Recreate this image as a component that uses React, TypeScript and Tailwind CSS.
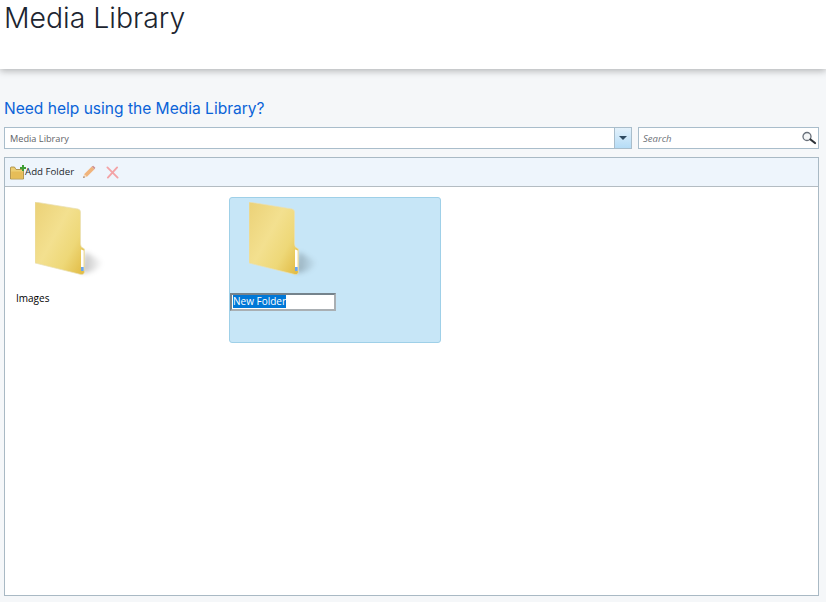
import React from "react";

function FolderIcon() {
  const id = React.useId();
  return (
    <svg width="70" height="80" viewBox="0 0 70 80" className="block">
      <defs>
        <linearGradient id={`${id}-body`} x1="0" y1="0.1" x2="1" y2="0.9">
          <stop offset="0" stopColor="#ecd37a" />
          <stop offset="0.42" stopColor="#f3e08f" />
          <stop offset="0.72" stopColor="#eed878" />
          <stop offset="1" stopColor="#e2bd48" />
        </linearGradient>
        <linearGradient id={`${id}-shadow`} x1="0" y1="0" x2="1" y2="0">
          <stop offset="0" stopColor="#000" stopOpacity="0.26" />
          <stop offset="1" stopColor="#000" stopOpacity="0" />
        </linearGradient>
        <filter id={`${id}-blur`} x="-30%" y="-30%" width="160%" height="160%">
          <feGaussianBlur stdDeviation="2.500" />
        </filter>
      </defs>
      <path d="M50 50 L68 60 Q62 71 46 71 Z" fill={`url(#${id}-shadow)`} filter={`url(#${id}-blur)`} />
      <path
        d="M0 0 L43 7 Q45.500 7.500 45.500 10 L45.500 42 Q45.500 45 48 46 L49.500 47 L49.500 69 Q49.500 73 46 72.500 L0 61 Z"
        fill={`url(#${id}-body)`}
        stroke="#eadfb4"
        strokeWidth="0.7"
      />
      <path d="M46 47.500 L48.700 48.500 L48.700 69 L46 69 Z" fill="#ffffff" />
      <rect x="46" y="65" width="2.700" height="4" fill="#6aa5ee" />
    </svg>
  );
}

function AddFolderIcon() {
  return (
    <svg width="16" height="16" viewBox="0 0 16 16" className="block">
      <path d="M0.500 3.500 L0.500 15 L13.500 15 L13.500 5.500 L6 5.500 L4.500 3 L1 3 Z" fill="#edcf74" stroke="#a5853a" strokeWidth="0.8" />
      <path d="M1.200 7.500 L12.800 7.500 L12.800 14.300 L1.200 14.300 Z" fill="#e6bd58" />
      <path d="M10 3 H12 V1 H14 V3 H16 V5 H14 V7 H12 V5 H10 Z" fill="#3f9e35" />
    </svg>
  );
}

function PencilIcon() {
  return (
    <svg width="14" height="14" viewBox="0 0 15 15" className="block">
      <path d="M1.500 13.500 L2.500 9.700 L10.500 1.700 L13.300 4.500 L5.300 12.500 Z" fill="#f0b47c" />
      <path d="M10.500 1.700 L12 0.700 L14.300 3 L13.300 4.500 Z" fill="#cf8f8f" />
      <path d="M1.500 13.500 L2.500 9.700 L5.300 12.500 Z" fill="#f7dcc0" />
      <path d="M1.200 13.800 L2 11.800 L3.200 13 Z" fill="#8a6a58" />
    </svg>
  );
}

function DeleteIcon() {
  return (
    <svg width="13" height="13" viewBox="0 0 14 14" className="block">
      <path d="M1.500 1.500 L12.500 12.500 M12 1.500 L2 12.500" stroke="#f3a3a6" strokeWidth="2" strokeLinecap="round" />
    </svg>
  );
}

function SearchIcon() {
  return (
    <svg width="16" height="14" viewBox="0 0 16 14" className="block">
      <circle cx="6" cy="5.500" r="4" fill="#f4f6f7" stroke="#68707a" strokeWidth="1.300" />
      <path d="M9.500 8.500 L14 12" stroke="#2d3338" strokeWidth="2.200" strokeLinecap="round" />
    </svg>
  );
}

export default function App() {
  return (
    <div className="min-h-[602px] h-[602px] overflow-hidden bg-[#f5f7f9] font-['Inter','Liberation_Sans',sans-serif]">
      <header className="h-[69px] bg-white pl-[4px] shadow-[0_2px_7px_rgba(0,0,0,0.28)]">
        <h1 className="text-[28.400px] leading-[35px] font-light text-[#1c2530]">Media Library</h1>
      </header>

      <div className="px-[4px] pt-[29px] pr-[7px]">
        <a className="block text-[15.550px] leading-[22px] text-[#0b63d8]">Need help using the Media Library?</a>

        <div className="mt-[7px] flex gap-[6px]">
          <div className="flex h-[22px] w-[628px] border border-[#a9bdcb] bg-white">
            <div className="flex-1 pl-[5px] text-[9.200px] leading-[21px] text-[#5f6468] font-['Open_Sans','Liberation_Sans',sans-serif]">
              Media Library
            </div>
            <div className="flex w-[17px] items-center justify-center border-l border-[#a9bdcb] bg-gradient-to-b from-[#e3f1fb] to-[#b5dcf6]">
              <div className="h-0 w-0 border-x-[4.500px] border-t-[4px] border-x-transparent border-t-[#2f4a60]" />
            </div>
          </div>
          <div className="flex h-[22px] w-[181px] items-center justify-between border border-[#a9bdcb] bg-white pl-[4px] pr-[1px]">
            <span className="mt-[2px] text-[9.500px] italic text-[#6d7278] font-['Open_Sans','Liberation_Sans',sans-serif]">Search</span>
            <SearchIcon />
          </div>
        </div>

        <div className="mt-[8px] h-[439px] border border-[#a9b9c4] bg-white font-['Open_Sans','Liberation_Sans',sans-serif]">
          <div className="flex h-[29px] items-center border-b border-[#b4bcc2] bg-[#eef5fc] pl-[5px]">
            <AddFolderIcon />
            <span className="ml-[-1px] text-[9.700px] text-[#24292e]">Add Folder</span>
            <div className="ml-[8px]"><PencilIcon /></div>
            <div className="ml-[10px]"><DeleteIcon /></div>
          </div>

          <div className="flex gap-[2px] pl-[10px] pt-[10px]">
            <div className="h-[146px] w-[212px] border border-transparent pl-[19px] pt-[4px]">
              <FolderIcon />
              <div className="ml-[-19px] mt-[9px] text-[10px] leading-[14px] text-black">Images</div>
            </div>
            <div className="h-[146px] w-[212px] rounded-[3px] border border-[#9fd0e8] bg-[#c7e6f7] pl-[19px] pt-[4px]">
              <FolderIcon />
              <div className="ml-[-19px] mt-[11px] h-[18px] w-[106px] border-2 border-t-[#75838c] border-l-[#75838c] border-r-[#a9afb3] border-b-[#a9afb3] bg-white pl-[1px] text-[10px] leading-[13px]">
                <span className="inline-block bg-[#0078d7] text-white">New Folder</span>
              </div>
            </div>
          </div>
        </div>
      </div>
    </div>
  );
}
